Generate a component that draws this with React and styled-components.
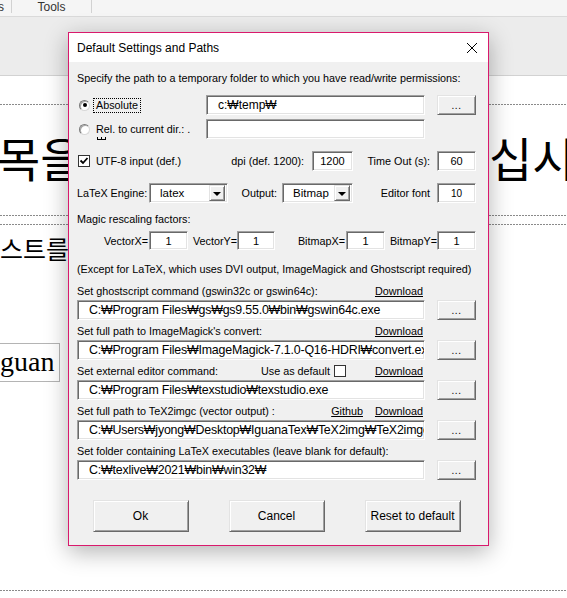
import React from 'react';
import styled, { createGlobalStyle } from 'styled-components';

const Global = createGlobalStyle`
  html, body { margin: 0; padding: 0; width: 567px; height: 598px; overflow: hidden; background: #fff; }
  #root { width: 567px; height: 598px; }
  * { box-sizing: border-box; }
`;

const Page = styled.div`
  position: relative;
  width: 567px;
  height: 598px;
  overflow: hidden;
  background: #fff;
  font-family: "Liberation Sans", Arial, sans-serif;
`;

/* ---------- background application ---------- */
const MenuBar = styled.div`
  height: 16px;
  background: #f5f5f5;
  display: flex;
  align-items: flex-start;
`;
const MenuItem = styled.div`
  width: ${p => p.$w}px;
  height: 13px;
  display: flex;
  justify-content: ${p => (p.$clip ? 'flex-end' : 'center')};
  align-items: center;
  overflow: hidden;
  white-space: nowrap;
  border-right: 1px solid #d2d2d2;
  font-size: 12px;
  color: #333;
  padding-top: 1px;
  padding-right: ${p => (p.$clip ? 7 : 0)}px;
`;
const Ribbon = styled.div`
  height: 60px;
  background: #ececec;
  border-top: 1px solid #dadada;
  border-bottom: 1px solid #d2d2d2;
`;
const Doc = styled.div`
  display: flex;
  flex-direction: column;
  font-family: "Noto Sans CJK KR", sans-serif;
  color: #000;
`;
const Dotted = styled.div`
  height: 1px;
  margin-top: ${p => p.$mt}px;
  background-image: linear-gradient(to right, #8a8a8a 60%, transparent 60%);
  background-size: 3px 1px;
`;
const BigLine = styled.div`
  display: flex;
  white-space: nowrap;
  font-size: ${p => p.$size}px;
  line-height: ${p => p.$lh}px;
  margin-top: ${p => p.$mt}px;
`;
const LeftPart = styled.span`
  width: ${p => p.$w}px;
  flex: none;
  margin-left: ${p => p.$ml || 0}px;
`;
const SerifBox = styled.div`
  margin-top: ${p => p.$mt}px;
  width: 60px;
  height: 39px;
  border-top: 1px solid #b4b4b4;
  border-bottom: 1px solid #b4b4b4;
  border-right: 1px solid #b4b4b4;
  font-family: "Liberation Serif", serif;
  font-size: 28px;
  line-height: 36px;
  overflow: hidden;
  white-space: nowrap;
`;

/* ---------- dialog ---------- */
const Dialog = styled.div`
  position: absolute;
  left: 68px;
  top: 32px;
  width: 421px;
  height: 514px;
  border: 1px solid #d9196c;
  background: #f0f0f0;
  box-shadow: 0 6px 22px rgba(0, 0, 0, 0.3);
  display: flex;
  flex-direction: column;
  font-family: "Liberation Sans", Arial, sans-serif;
  color: #000;
`;
const TitleBar = styled.div`
  height: 29px;
  background: #fff;
  display: flex;
  align-items: center;
  justify-content: space-between;
  padding: 0 10px 0 8px;
`;
const Title = styled.div`
  font-size: 12px;
  color: #000;
`;
const Body = styled.div`
  flex: 1;
  display: flex;
  flex-direction: column;
  padding: 9px 12px 0 8px;
`;
const Text = styled.div`
  font-size: 10.8px;
  line-height: 14px;
  height: 14px;
  white-space: nowrap;
  margin-top: ${p => p.$mt || 0}px;
`;
const Row = styled.div`
  display: flex;
  align-items: center;
  height: ${p => p.$h || 20}px;
  margin-top: ${p => p.$mt || 0}px;
`;
const Cell = styled.div`
  width: ${p => p.$w}px;
  flex: none;
  font-size: 10.8px;
  white-space: nowrap;
  text-align: ${p => p.$align || 'left'};
  padding-right: ${p => p.$pr || 0}px;
`;
const Field = styled.div`
  width: ${p => (p.$w ? `${p.$w}px` : 'auto')};
  flex: ${p => (p.$w ? 'none' : '1')};
  min-width: 0;
  height: ${p => p.$h || 20}px;
  background: #fff;
  border: 1px solid;
  border-color: #a0a0a0 #ffffff #ffffff #a0a0a0;
  box-shadow: inset 1px 1px #696969, inset -1px -1px #e3e3e3;
  display: flex;
  align-items: center;
  justify-content: ${p => (p.$center ? 'center' : 'flex-start')};
  padding-left: ${p => (p.$center ? 0 : 11)}px;
  font-size: ${p => p.$fs || 12}px;
  letter-spacing: ${p => p.$ls || 0}px;
  white-space: nowrap;
  overflow: hidden;
`;
const DotsButton = styled.div`
  width: 39px;
  height: 20px;
  flex: none;
  margin-left: auto;
  background: #f0f0f0;
  border: 1px solid;
  border-color: #e3e3e3 #696969 #696969 #e3e3e3;
  box-shadow: inset 1px 1px #fff, inset -1px -1px #a0a0a0;
  display: flex;
  justify-content: center;
  align-items: flex-end;
  padding-bottom: 3px;
  font-size: 10px;
  line-height: 10px;
  letter-spacing: 0.5px;
`;
const Option = styled.div`
  width: ${p => (p.$w ? `${p.$w}px` : 'auto')};
  flex: ${p => (p.$w ? 'none' : '1')};
  display: flex;
  align-items: center;
  padding-left: ${p => p.$pl || 0}px;
  font-size: 10.8px;
  white-space: nowrap;
`;
const Radio = styled.span`
  width: 11px;
  height: 11px;
  border-radius: 50%;
  background: #fff;
  border: 1px solid;
  border-color: #7a7a7a #d8d8d8 #d8d8d8 #7a7a7a;
  box-shadow: inset 1px 1px #a8a8a8;
  display: flex;
  align-items: center;
  justify-content: center;
  flex: none;
  &::after {
    content: '';
    width: 4px;
    height: 4px;
    border-radius: 50%;
    background: ${p => (p.$on ? '#000' : 'transparent')};
  }
`;
const OptLabel = styled.span`
  margin-left: 4px;
  padding: 0 2px;
  line-height: 13px;
  outline: ${p => (p.$focus ? '1px dotted #000' : 'none')};
  position: relative;
`;
const Accel = styled.span`
  position: absolute;
  left: 3px;
  top: 14px;
  width: 9px;
  height: 3px;
  border-bottom: 1px solid #000;
  border-left: 1px solid #000;
  border-right: 1px solid #000;
  &::after {
    content: '';
    position: absolute;
    left: 3px;
    top: 0;
    width: 1px;
    height: 3px;
    background: #000;
  }
`;
const Check = styled.span`
  width: 12px;
  height: 12px;
  flex: none;
  background: #fff;
  border: 1px solid #333;
  display: flex;
  align-items: center;
  justify-content: center;
  margin-left: ${p => p.$ml || 0}px;
`;
const Combo = styled.div`
  width: ${p => p.$w}px;
  height: 20px;
  flex: none;
  background: #fff;
  border: 1px solid;
  border-color: #a0a0a0 #ffffff #ffffff #a0a0a0;
  box-shadow: inset 1px 1px #696969, inset -1px -1px #e3e3e3;
  display: flex;
  align-items: center;
  padding: 0 2px 0 10px;
  font-size: 11.5px;
`;
const ComboText = styled.span`
  flex: 1;
`;
const DropBtn = styled.span`
  width: 16px;
  height: 16px;
  background: #f0f0f0;
  border: 1px solid;
  border-color: #e3e3e3 #696969 #696969 #e3e3e3;
  box-shadow: inset 1px 1px #fff, inset -1px -1px #a0a0a0;
  display: flex;
  align-items: center;
  justify-content: center;
  &::after {
    content: '';
    border-left: 4px solid transparent;
    border-right: 4px solid transparent;
    border-top: 4px solid #000;
    margin-top: 1px;
  }
`;
const PathGrid = styled.div`
  display: grid;
  grid-template-columns: minmax(0, 1fr) 39px;
  column-gap: 12px;
  align-items: center;
  height: ${p => p.$h}px;
  margin-top: ${p => p.$mt || 0}px;
`;
const LabelLine = styled.div`
  display: flex;
  align-items: center;
  padding-right: 2px;
  font-size: 10.8px;
  white-space: nowrap;
  height: 14px;
  min-width: 0;
`;
const Grow = styled.span`
  flex: 1;
`;
const Link = styled.span`
  text-decoration: underline;
  text-underline-offset: 1px;
  margin-left: ${p => p.$ml || 0}px;
`;
const Side = styled.span`
  display: flex;
  align-items: center;
`;
const ButtonBar = styled.div`
  display: flex;
  justify-content: center;
  gap: 40px;
  margin-top: 20px;
`;
const PushButton = styled.div`
  width: 96px;
  height: 32px;
  background: #f0f0f0;
  border: 1px solid;
  border-color: #e3e3e3 #696969 #696969 #e3e3e3;
  box-shadow: inset 1px 1px #fff, inset -1px -1px #a0a0a0;
  display: flex;
  align-items: center;
  justify-content: center;
  font-size: 12px;
`;

const CloseIcon = () => (
  <svg width="12" height="12" viewBox="0 0 12 12">
    <path d="M1 1 L11 11 M11 1 L1 11" stroke="#000" strokeWidth="1" fill="none" />
  </svg>
);
const CheckMark = () => (
  <svg width="10" height="10" viewBox="0 0 10 10">
    <path d="M1.5 4.5 L4 7 L8.5 2" stroke="#000" strokeWidth="1.8" fill="none" />
  </svg>
);

const paths = [
  { label: 'Set ghostscript command (gswin32c or gswin64c):', value: 'C:₩Program Files₩gs₩gs9.55.0₩bin₩gswin64c.exe', download: true },
  { label: "Set full path to ImageMagick's convert:", value: 'C:₩Program Files₩ImageMagick-7.1.0-Q16-HDRI₩convert.exe', download: true },
  { label: 'Set external editor command:', value: 'C:₩Program Files₩texstudio₩texstudio.exe', download: true, useDefault: true },
  { label: 'Set full path to TeX2imgc (vector output) :', value: 'C:₩Users₩jyong₩Desktop₩IguanaTex₩TeX2img₩TeX2imgc.exe', download: true, github: true },
  { label: 'Set folder containing LaTeX executables (leave blank for default):', value: 'C:₩texlive₩2021₩bin₩win32₩' },
];

export default function App() {
  return (
    <Page>
      <Global />
      <MenuBar>
        <MenuItem $w={12} $clip>Options</MenuItem>
        <MenuItem $w={80}>Tools</MenuItem>
      </MenuBar>
      <Ribbon />
      <Doc>
        <Dotted $mt={28} />
        <BigLine $size={47} $lh={60} $mt={22}>
          <LeftPart $w={492} $ml={-3}>목을</LeftPart>
          <span>십시오</span>
        </BigLine>
        <Dotted $mt={28} />
        <Dotted $mt={8} />
        <BigLine $size={25} $lh={30} $mt={8}>
          <LeftPart $w={200}>스트를</LeftPart>
        </BigLine>
        <SerifBox $mt={80}>guan</SerifBox>
        <Dotted $mt={208} />
      </Doc>

      <Dialog>
        <TitleBar>
          <Title>Default Settings and Paths</Title>
          <CloseIcon />
        </TitleBar>
        <Body>
          <Text>Specify the path to a temporary folder to which you have read/write permissions:</Text>
          <Row $mt={10}>
            <Option $w={129} $pl={2}>
              <Radio $on />
              <OptLabel $focus>Absolute</OptLabel>
            </Option>
            <Field $w={219} $fs={12}>c:₩temp₩</Field>
            <DotsButton>...</DotsButton>
          </Row>
          <Row $mt={4}>
            <Option $w={129} $pl={2}>
              <Radio />
              <OptLabel>Rel. to current dir.: .<Accel /></OptLabel>
            </Option>
            <Field $w={219} />
          </Row>
          <Row $mt={12}>
            <Option $pl={1}>
              <Check><CheckMark /></Check>
              <OptLabel>UTF-8 input (def.)</OptLabel>
            </Option>
            <Cell $pr={8}>dpi (def. 1200):</Cell>
            <Field $w={41} $center $fs={11}>1200</Field>
            <Cell $w={84} $align="right" $pr={7}>Time Out (s):</Cell>
            <Field $w={39} $center $fs={11}>60</Field>
          </Row>
          <Row $mt={12}>
            <Cell $w={72}>LaTeX Engine:</Cell>
            <Combo $w={79}><ComboText>latex</ComboText><DropBtn /></Combo>
            <Cell $w={54} $align="right" $pr={5}>Output:</Cell>
            <Combo $w={71}><ComboText>Bitmap</ComboText><DropBtn /></Combo>
            <Cell $w={84} $align="right" $pr={7}>Editor font</Cell>
            <Field $w={39} $center $fs={10}>10</Field>
          </Row>
          <Text $mt={9}>Magic rescaling factors:</Text>
          <Row $mt={5} $h={19}>
            <Cell $w={72} $align="right" $pr={1}>VectorX=</Cell>
            <Field $w={39} $h={19} $center $fs={11}>1</Field>
            <Cell $w={49} $align="right">VectorY=</Cell>
            <Field $w={38} $h={19} $center $fs={11}>1</Field>
            <Cell $w={71} $align="right" $pr={1}>BitmapX=</Cell>
            <Field $w={39} $h={19} $center $fs={11}>1</Field>
            <Cell $w={52} $align="right">BitmapY=</Cell>
            <Field $w={39} $h={19} $center $fs={11}>1</Field>
          </Row>
          <Text $mt={12}>(Except for LaTeX, which uses DVI output, ImageMagick and Ghostscript required)</Text>
          {paths.map((p, i) => (
            <React.Fragment key={i}>
              <PathGrid $h={14} $mt={i === 0 ? 8 : 4}>
                <LabelLine>
                  <Grow>{p.label}</Grow>
                  {p.useDefault && (
                    <Side>
                      Use as default
                      <Check $ml={4} />
                    </Side>
                  )}
                  {p.github && <Link>Github</Link>}
                  {p.download && <Link $ml={p.github ? 12 : p.useDefault ? 29 : 0}>Download</Link>}
                </LabelLine>
                <span />
              </PathGrid>
              <PathGrid $h={20} $mt={2}>
                <Field $fs={12.4} $ls={-0.2}>{p.value}</Field>
                <DotsButton>...</DotsButton>
              </PathGrid>
            </React.Fragment>
          ))}
          <ButtonBar>
            <PushButton>Ok</PushButton>
            <PushButton>Cancel</PushButton>
            <PushButton>Reset to default</PushButton>
          </ButtonBar>
        </Body>
      </Dialog>
    </Page>
  );
}
